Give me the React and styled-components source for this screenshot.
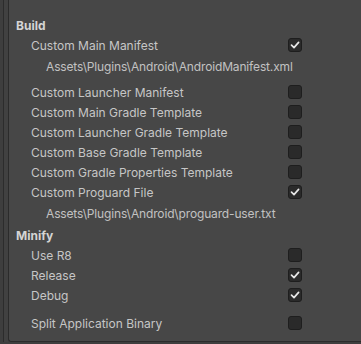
import styled, { createGlobalStyle } from "styled-components";

const GlobalStyle = createGlobalStyle`
  html, body {
    margin: 0;
    padding: 0;
    background: #3e3e3e;
  }
  body {
    font-family: Inter, "Noto Sans", sans-serif;
    font-size: 12px;
    -webkit-font-smoothing: antialiased;
  }
`;

const Page = styled.div`
  width: 361px;
  height: 344px;
  overflow: hidden;
  padding-left: 3px;
  box-sizing: border-box;
`;

const Gutter = styled.div`
  height: 342px;
  border-left: 1px solid #2c2c2c;
  padding-left: 4px;
  box-sizing: border-box;
  background: #414141;
`;

const Panel = styled.div`
  height: 342px;
  box-sizing: border-box;
  background: #474747;
  border-left: 1px solid #2b2b2b;
  border-bottom: 1px solid #2b2b2b;
  border-bottom-left-radius: 3px;
  padding-top: 16px;
`;

const Header = styled.div`
  height: 19px;
  line-height: 19px;
  padding-left: 7px;
  font-weight: 700;
  color: #d4d4d4;
  margin-top: ${(p) => p.$gap || 0}px;
`;

const Row = styled.div`
  display: grid;
  grid-template-columns: 1fr 14px;
  align-items: center;
  height: 20px;
  padding: 0 59px 0 22px;
  margin-top: ${(p) => p.$gap || 0}px;
  color: #c6c6c6;
`;

const Path = styled.div`
  height: 20px;
  line-height: 20px;
  padding-left: 37px;
  color: #c2c2c2;
  letter-spacing: -0.15px;
  margin: 2px 0 ${(p) => p.$after}px;
`;

const Box = styled.div`
  width: 14px;
  height: 14px;
  box-sizing: border-box;
  background: #2a2a2a;
  border: 1px solid #1e1e1e;
  border-radius: 3px;
  display: flex;
  align-items: center;
  justify-content: center;
`;

function Check({ on }) {
  return (
    <Box>
      {on && (
        <svg width="10" height="10" viewBox="0 0 10 10">
          <path d="M1.5 5.2 L4 7.6 L8.6 2.4" fill="none" stroke="#e6e6e6" strokeWidth="1.7" strokeLinecap="round" strokeLinejoin="round" />
        </svg>
      )}
    </Box>
  );
}

function Prop({ label, on, gap }) {
  return (
    <Row $gap={gap}>
      <span>{label}</span>
      <Check on={on} />
    </Row>
  );
}

export default function App() {
  return (
    <>
      <GlobalStyle />
      <Page>
        <Gutter>
          <Panel>
            <Header>Build</Header>
            <Prop label="Custom Main Manifest" on />
            <Path $after={5}>Assets\Plugins\Android\AndroidManifest.xml</Path>
            <Prop label="Custom Launcher Manifest" />
            <Prop label="Custom Main Gradle Template" />
            <Prop label="Custom Launcher Gradle Template" />
            <Prop label="Custom Base Gradle Template" />
            <Prop label="Custom Gradle Properties Template" />
            <Prop label="Custom Proguard File" on />
            <Path $after={2}>Assets\Plugins\Android\proguard-user.txt</Path>
            <Header>Minify</Header>
            <Prop label="Use R8" />
            <Prop label="Release" on />
            <Prop label="Debug" on />
            <Prop label="Split Application Binary" gap={8} />
          </Panel>
        </Gutter>
      </Page>
    </>
  );
}
